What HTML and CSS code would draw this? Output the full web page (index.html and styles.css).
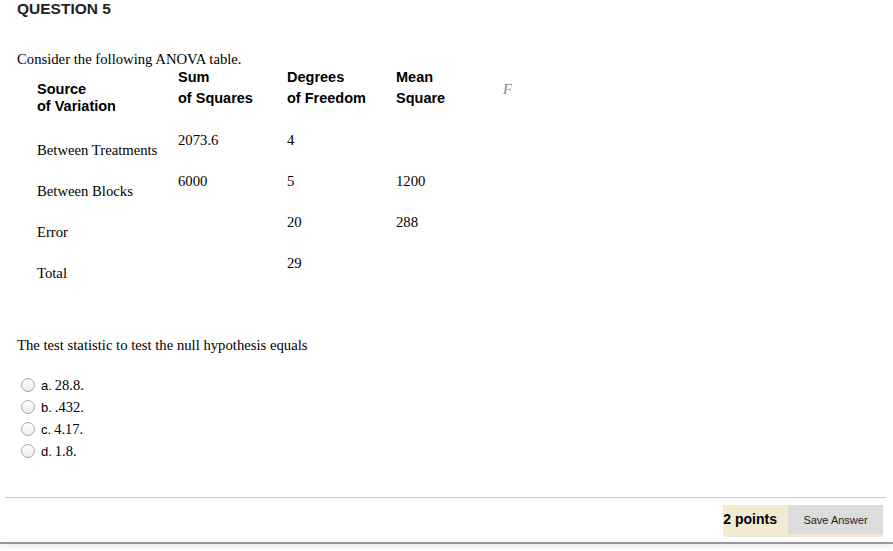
FILE: index.html
```html
<!DOCTYPE html>
<html>
<head>
<meta charset="utf-8">
<link rel="stylesheet" href="styles.css">
</head>
<body>
<div class="page">
  <h1 class="qtitle">QUESTION 5</h1>
  <div class="qbody">
    <p class="intro">Consider the following ANOVA table.</p>
    <div class="anova">
      <div class="hcell src">Source<br>of Variation</div>
      <div class="hcell">Sum<br>of Squares</div>
      <div class="hcell">Degrees<br>of Freedom</div>
      <div class="hcell">Mean<br>Square</div>
      <div class="hcell fcol">F</div>

      <div class="lab">Between Treatments</div><div class="val">2073.6</div><div class="val">4</div><div class="val"></div><div class="val"></div>
      <div class="lab">Between Blocks</div><div class="val">6000</div><div class="val">5</div><div class="val">1200</div><div class="val"></div>
      <div class="lab">Error</div><div class="val"></div><div class="val">20</div><div class="val">288</div><div class="val"></div>
      <div class="lab">Total</div><div class="val"></div><div class="val">29</div><div class="val"></div><div class="val"></div>
    </div>
    <p class="stmt">The test statistic to test the null hypothesis equals</p>
    <ul class="opts">
      <li class="opt"><span class="radio"></span><span class="letter">a.</span><span class="ans">28.8.</span></li>
      <li class="opt"><span class="radio"></span><span class="letter">b.</span><span class="ans">.432.</span></li>
      <li class="opt"><span class="radio"></span><span class="letter">c.</span><span class="ans">4.17.</span></li>
      <li class="opt"><span class="radio"></span><span class="letter">d.</span><span class="ans">1.8.</span></li>
    </ul>
  </div>
  <div class="divider"></div>
  <div class="footer">
    <div class="pointsbox">
      <span class="points">2 points</span>
      <button class="save">Save Answer</button>
    </div>
  </div>
  <div class="bottomline"></div>
</div>
</body>
</html>
```
FILE: styles.css
```css
html, body {
  margin: 0;
  padding: 0;
  background: #fff;
}
.page {
  width: 893px;
  height: 551px;
  overflow: hidden;
  color: #000;
}
.qtitle {
  margin: 0;
  padding-left: 17px;
  font-family: "Liberation Sans", Arial, sans-serif;
  font-weight: bold;
  font-size: 15.5px;
  line-height: 18px;
  color: #222;
}
.qbody {
  padding-left: 17px;
}
.intro {
  margin: 34px 0 0 0;
  font-family: "Liberation Serif", "Times New Roman", serif;
  font-size: 14.7px;
  line-height: 15px;
}
.anova {
  display: grid;
  grid-template-columns: 141px 109px 109px 109px auto;
  grid-template-rows: 64px repeat(4, 41px);
  margin-left: 20px;
}
.hcell {
  font-family: "Liberation Sans", Arial, sans-serif;
  font-weight: bold;
  font-size: 14.5px;
  line-height: 21px;
}
.hcell.src {
  padding-top: 14px;
  line-height: 17px;
}
.hcell.fcol {
  padding-top: 12px;
  line-height: 20px;
  font-family: "Liberation Serif", "Times New Roman", serif;
  font-style: italic;
  font-weight: normal;
  color: #888;
  font-size: 14.7px;
  margin-left: -2px;
}
.lab, .val {
  font-family: "Liberation Serif", "Times New Roman", serif;
  font-size: 14.7px;
  line-height: 18px;
}
.lab {
  padding-top: 10px;
}
.stmt {
  margin: 41px 0 0 0;
  font-family: "Liberation Serif", "Times New Roman", serif;
  font-size: 14.7px;
  line-height: 18px;
}
.opts {
  list-style: none;
  margin: 20px 0 0 0;
  padding: 0 0 0 4px;
}
.opt {
  display: flex;
  align-items: center;
  height: 22px;
}
.radio {
  width: 12px;
  height: 12px;
  border: 1px solid #a8a8a8;
  border-radius: 50%;
  background: linear-gradient(#ffffff, #ececec);
  margin-right: 6px;
  flex: none;
}
.letter {
  font-family: "Liberation Sans", Arial, sans-serif;
  font-size: 13px;
  margin-right: 3px;
}
.ans {
  font-family: "Liberation Serif", "Times New Roman", serif;
  font-size: 14.5px;
}
.divider {
  margin: 35px 7px 0 5px;
  height: 1px;
  background: #cfcfcf;
}
.footer {
  display: flex;
  justify-content: flex-end;
  padding-right: 10px;
  margin-top: 7px;
}
.pointsbox {
  display: flex;
  align-items: flex-start;
  background: #f2ebd1;
  height: 32px;
  border-radius: 0 0 0 4px;
}
.points {
  font-family: "Liberation Sans", Arial, sans-serif;
  font-weight: bold;
  font-size: 14px;
  line-height: 28px;
  margin-right: 11px;
}
.save {
  width: 95px;
  height: 29px;
  border: none;
  background: #dcdcdc;
  font-family: "Liberation Sans", Arial, sans-serif;
  font-size: 11px;
  color: #222;
  padding: 0;
}
.bottomline {
  margin-top: 5px;
  height: 2px;
  background: #9a9a9a;
  box-shadow: 0 2px 4px rgba(0,0,0,0.15);
}
```
